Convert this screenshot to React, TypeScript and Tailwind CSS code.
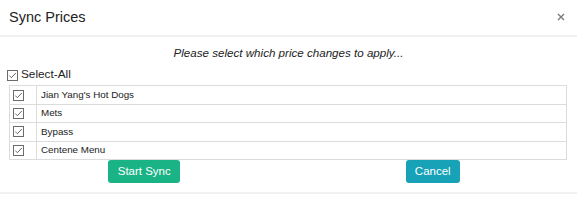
import React from "react";

function Check({ size = 11 }: { size?: number }) {
  return (
    <svg width={size} height={size} viewBox="0 0 11 11" className="block shrink-0">
      <rect x="0.5" y="0.5" width="10" height="10" fill="#fff" stroke="#6b6b6b" strokeWidth="1" />
      <path d="M2.3 5.6 L4.4 7.7 L8.8 3.0" fill="none" stroke="#555" strokeWidth="0.9" />
    </svg>
  );
}

const rows = ["Jian Yang's Hot Dogs", "Mets", "Bypass", "Centene Menu"];

export default function App() {
  return (
    <div className="w-[577px] h-[207px] bg-white text-[#222]" style={{ fontFamily: '"Liberation Sans", Arial, sans-serif' }}>
      <div className="h-[37px] flex items-center justify-between pl-[9px] pr-[12px] border-b-2 border-[#f1f1f1]">
        <span className="text-[14.5px] text-[#222]">Sync Prices</span>
        <svg width="8" height="8" viewBox="0 0 8 8" className="mb-[2px]">
          <path d="M1 1 L7 7 M7 1 L1 7" stroke="#7a7a7a" strokeWidth="1.4" />
        </svg>
      </div>
      <div className="pt-[9px] text-center italic text-[11.6px] leading-[14px] text-[#222]">
        Please select which price changes to apply...
      </div>
      <div className="flex items-center gap-[3px] pl-[7px] mt-[9px] h-[12px] text-[11.8px]">
        <Check />
        <span>Select-All</span>
      </div>
      <div className="ml-[9px] mr-[10px] mt-[4px] border border-[#dcdcdc]">
        {rows.map((r, i) => (
          <div key={r} className={`flex h-[18.2px] ${i > 0 ? "border-t border-[#dcdcdc]" : ""}`}>
            <div className="w-[27px] border-r border-[#dcdcdc] flex items-center pl-[3px]">
              <Check />
            </div>
            <div className="flex items-center pl-[4px] text-[9.8px] text-[#222]">{r}</div>
          </div>
        ))}
      </div>
      <div className="flex">
        <div className="flex-1 flex justify-center">
          <button className="h-[23px] w-[72px] rounded-[3px] bg-[#1ab385] text-white text-[11.5px]">Start Sync</button>
        </div>
        <div className="flex-1 flex justify-center">
          <button className="h-[23px] w-[54px] rounded-[3px] bg-[#17a2b8] text-white text-[11.5px]">Cancel</button>
        </div>
      </div>
      <div className="mt-[9px] border-b-2 border-[#f1f1f1]" />
    </div>
  );
}
